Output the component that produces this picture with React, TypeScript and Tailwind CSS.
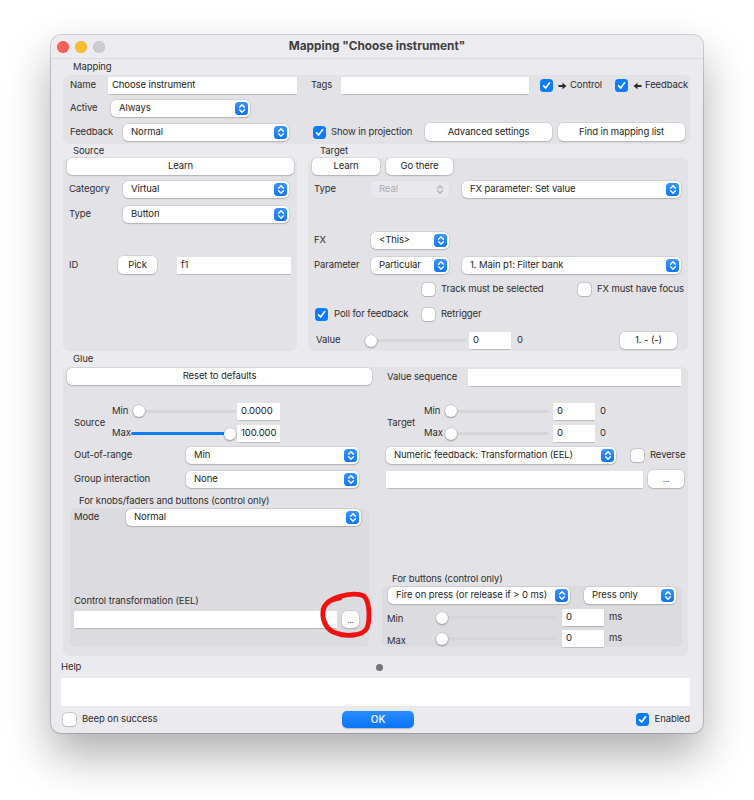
import React from "react";

const ctl =
  "shadow-[0_0_0_0.5px_rgba(0,0,0,0.13),0_1px_1.5px_rgba(0,0,0,0.16)]";

const Chevrons = ({ disabled }: { disabled?: boolean }) => (
  <span
    className={
      disabled
        ? "mr-[3px] flex h-[13px] w-[13px] items-center justify-center text-[#b3b2b6]"
        : "mr-[2px] flex h-[13px] w-[13px] items-center justify-center rounded-[3.5px] bg-[linear-gradient(#3b95ff,#0d76f5)] text-white"
    }
  >
    <svg width="8" height="11" viewBox="0 0 8 11" fill="none" stroke="currentColor" strokeWidth="1.4" strokeLinecap="round" strokeLinejoin="round">
      <path d="M1.6 4.2 L4 1.8 L6.4 4.2" />
      <path d="M1.6 6.8 L4 9.2 L6.4 6.8" />
    </svg>
  </span>
);

function Select({ className, value, disabled }: { className: string; value: string; disabled?: boolean }) {
  return (
    <div
      className={`flex h-[17px] shrink-0 items-center justify-between rounded-[5px] pl-[8px] ${
        disabled
          ? "bg-[#e9e8ec] text-[#aeadb2] shadow-[0_0_0_0.5px_rgba(0,0,0,0.04)]"
          : `bg-white text-[#262626] ${ctl}`
      } ${className}`}
    >
      <span className="truncate">{value}</span>
      <Chevrons disabled={disabled} />
    </div>
  );
}

function Btn({ className, children }: { className: string; children: React.ReactNode }) {
  return (
    <div className={`flex h-[17px] shrink-0 items-center justify-center rounded-[5px] bg-white text-[#262626] ${ctl} ${className}`}>
      {children}
    </div>
  );
}

function Field({ className, value }: { className: string; value?: string }) {
  return (
    <div className={`flex h-[17px] shrink-0 items-center bg-white pl-[4px] text-[#222] shadow-[0_0.5px_1px_rgba(0,0,0,0.18)] ${className}`}>
      {value}
    </div>
  );
}

function Check({ on }: { on?: boolean }) {
  return on ? (
    <span className="flex h-[13px] w-[13px] shrink-0 items-center justify-center rounded-[3.5px] bg-[#0b7cff]">
      <svg width="9" height="9" viewBox="0 0 10 10">
        <path d="M1.8 5.4 L4 7.8 L8.4 2" fill="none" stroke="white" strokeWidth="1.9" strokeLinecap="round" strokeLinejoin="round" />
      </svg>
    </span>
  ) : (
    <span className="block h-[13px] w-[13px] shrink-0 rounded-[3.5px] bg-white shadow-[0_0_0_0.5px_rgba(0,0,0,0.22),0_0.5px_1px_rgba(0,0,0,0.12)]" />
  );
}

function Slider({ className, full }: { className: string; full?: boolean }) {
  return (
    <div className={`relative flex h-[12px] shrink-0 items-center ${className}`}>
      <div className="h-[3px] w-full rounded-full bg-[#d6d5d9]" />
      {full && <div className="absolute left-[-2px] h-[3px] w-[calc(100%-4px)] rounded-full bg-[#0b7cff]" />}
      <span
        className={`absolute top-0 h-[12px] w-[12px] rounded-full bg-white shadow-[0_0_0_0.5px_rgba(0,0,0,0.15),0_1px_2px_rgba(0,0,0,0.3)] ${
          full ? "right-0" : "left-0"
        }`}
      />
    </div>
  );
}

const Arrow = ({ left }: { left?: boolean }) => (
  <svg width="9" height="8" viewBox="0 0 9 8" className={left ? "mr-[3px] rotate-180" : "mr-[3px]"}>
    <path d="M0.5 3 H4.5 V0.8 L8.5 4 L4.5 7.2 V5 H0.5 Z" fill="#2a2a2a" />
  </svg>
);

export default function App() {
  return (
    <div className="min-h-[800px] bg-white pl-[51px] pt-[35px] text-[9.5px] tracking-[-0.1px] text-[#2e2e30] [font-family:Inter,'Liberation_Sans',sans-serif]">
      <div className="relative h-[698px] w-[652px] overflow-hidden rounded-[10px] bg-[#ebeaee] shadow-[0_22px_45px_rgba(0,0,0,0.32),0_0_0_1px_rgba(0,0,0,0.16)]">
        {/* title bar */}
        <div className="grid h-[24px] grid-cols-[1fr_auto_1fr] items-center border-b border-[#dcdbdf] bg-[#ecebef]">
          <div className="flex gap-[6px] pl-[6px]">
            <span className="h-[12px] w-[12px] rounded-full bg-[#fe5f57] shadow-[inset_0_0_0_0.5px_rgba(0,0,0,0.12)]" />
            <span className="h-[12px] w-[12px] rounded-full bg-[#febc2e] shadow-[inset_0_0_0_0.5px_rgba(0,0,0,0.12)]" />
            <span className="h-[12px] w-[12px] rounded-full bg-[#cdcccf] shadow-[inset_0_0_0_0.5px_rgba(0,0,0,0.1)]" />
          </div>
          <div className="text-[11.8px] font-bold tracking-normal text-[#3e3e40]">Mapping "Choose instrument"</div>
          <div />
        </div>

        {/* Mapping */}
        <div className="flex h-[16px] items-center pl-[22px]">Mapping</div>
        <div className="ml-[12px] h-[69px] w-[627px] rounded-[6px] bg-[#e3e2e6] pt-[2px]">
          <div className="flex h-[17px] items-center pl-[7px]">
            <span className="w-[38px]">Name</span>
            <Field className="w-[189px]" value="Choose instrument" />
            <span className="ml-[14px] w-[30px]">Tags</span>
            <Field className="w-[188px]" />
            <span className="ml-[11px] flex w-[75px] items-center">
              <Check on />
              <span className="ml-[5px] flex items-center">
                <Arrow />
                Control
              </span>
            </span>
            <span className="flex items-center">
              <Check on />
              <span className="ml-[5px] flex items-center">
                <Arrow left />
                Feedback
              </span>
            </span>
          </div>
          <div className="mt-[6px] flex h-[17px] items-center pl-[7px]">
            <span className="w-[41px]">Active</span>
            <Select className="w-[139px]" value="Always" />
          </div>
          <div className="mt-[6px] flex h-[18px] items-center pl-[7px]">
            <span className="w-[53px]">Feedback</span>
            <Select className="w-[166px]" value="Normal" />
            <span className="ml-[24px] flex w-[112px] items-center">
              <Check on />
              <span className="ml-[5px]">Show in projection</span>
            </span>
            <Btn className="h-[18px] w-[127px]">Advanced settings</Btn>
            <Btn className="ml-[6px] h-[18px] w-[127px]">Find in mapping list</Btn>
          </div>
        </div>

        {/* Source / Target */}
        <div className="ml-[12px] flex">
          <div className="w-[234px]">
            <div className="flex h-[14px] items-center pl-[10px] pt-[1px]">Source</div>
            <div className="h-[193px] rounded-[6px] bg-[#e3e2e6]">
              <Btn className="ml-[4px] w-[227px]">Learn</Btn>
              <div className="mt-[6px] flex h-[17px] items-center pl-[6px]">
                <span className="w-[54px]">Category</span>
                <Select className="w-[166px]" value="Virtual" />
              </div>
              <div className="mt-[8px] flex h-[17px] items-center pl-[6px]">
                <span className="w-[54px]">Type</span>
                <Select className="w-[166px]" value="Button" />
              </div>
              <div className="mt-[33px] flex h-[18px] items-center pl-[6px]">
                <span className="w-[49px]">ID</span>
                <Btn className="h-[18px] w-[39px]">Pick</Btn>
                <Field className="ml-[20px] w-[114px]" value="f1" />
              </div>
            </div>
          </div>
          <div className="ml-[11px] w-[380px]">
            <div className="flex h-[14px] items-center pl-[12px] pt-[1px]">Target</div>
            <div className="h-[193px] rounded-[6px] bg-[#e3e2e6]">
              <div className="flex h-[17px] items-center pl-[4px]">
                <Btn className="w-[68px]">Learn</Btn>
                <Btn className="ml-[6px] w-[67px]">Go there</Btn>
              </div>
              <div className="mt-[6px] flex h-[17px] items-center pl-[6px]">
                <span className="w-[57px]">Type</span>
                <Select className="w-[78px]" value="Real" disabled />
                <Select className="ml-[13px] w-[219px]" value="FX parameter: Set value" />
              </div>
              <div className="mt-[34px] flex h-[17px] items-center pl-[6px]">
                <span className="w-[57px]">FX</span>
                <Select className="w-[78px]" value="<This>" />
              </div>
              <div className="mt-[8px] flex h-[17px] items-center pl-[6px]">
                <span className="w-[57px]">Parameter</span>
                <Select className="w-[78px]" value="Particular" />
                <Select className="ml-[13px] w-[219px]" value="1. Main p1: Filter bank" />
              </div>
              <div className="mt-[9px] flex h-[13px] items-center pl-[114px]">
                <span className="flex w-[156px] items-center">
                  <Check />
                  <span className="ml-[6px]">Track must be selected</span>
                </span>
                <Check />
                <span className="ml-[6px]">FX must have focus</span>
              </div>
              <div className="mt-[12px] flex h-[13px] items-center pl-[7px]">
                <span className="flex w-[107px] items-center">
                  <Check on />
                  <span className="ml-[6px]">Poll for feedback</span>
                </span>
                <Check />
                <span className="ml-[6px]">Retrigger</span>
              </div>
              <div className="mt-[11px] flex h-[17px] items-center pl-[8px] pr-[11px]">
                <span className="w-[49px]">Value</span>
                <Slider className="w-[101px]" />
                <Field className="ml-[3px] w-[42px]" value="0" />
                <span className="ml-[6px] flex-1">0</span>
                <Btn className="w-[57px]">1. - (-)</Btn>
              </div>
            </div>
          </div>
        </div>

        {/* Glue */}
        <div className="flex h-[16px] items-center pl-[22px]">Glue</div>
        <div className="ml-[12px] flex h-[289px] w-[625px] rounded-[6px] bg-[#e3e2e6]">
          <div className="w-[309px] pt-[1px]">
            <Btn className="ml-[4px] w-[305px]">Reset to defaults</Btn>
            <div className="mt-[18px] flex h-[39px] items-center pl-[11px]">
              <span className="w-[38px] pt-[2px]">Source</span>
              <div className="flex flex-col">
                <div className="flex h-[16px] items-center">
                  <span className="w-[21px]">Min</span>
                  <Slider className="w-[103px]" />
                  <Field className="ml-[1px] h-[16px] w-[43px]" value="0.0000" />
                </div>
                <div className="mt-[6px] flex h-[17px] items-center">
                  <span className="w-[21px]">Max</span>
                  <Slider className="w-[103px]" full />
                  <Field className="ml-[1px] w-[43px]" value="100.000" />
                </div>
              </div>
            </div>
            <div className="mt-[5px] flex h-[17px] items-center pl-[11px]">
              <span className="w-[112px]">Out-of-range</span>
              <Select className="w-[173px]" value="Min" />
            </div>
            <div className="mt-[7px] flex h-[17px] items-center pl-[11px]">
              <span className="w-[112px]">Group interaction</span>
              <Select className="w-[173px]" value="None" />
            </div>
            <div className="mt-[6px] flex h-[14px] items-center pl-[16px]">For knobs/faders and buttons (control only)</div>
            <div className="ml-[7px] h-[139px] w-[299px] rounded-[6px] bg-[#dcdbdf] pt-[1px]">
              <div className="flex h-[17px] items-center pl-[4px]">
                <span className="w-[52px]">Mode</span>
                <Select className="w-[235px]" value="Normal" />
              </div>
              <div className="mt-[68px] flex h-[14px] items-center pl-[4px]">Control transformation (EEL)</div>
              <div className="mt-[3px] flex h-[17px] items-center pl-[4px]">
                <Field className="w-[263px]" />
                <Btn className="ml-[5px] w-[17px] text-[8px]">...</Btn>
              </div>
            </div>
          </div>
          <div className="ml-[10px] w-[306px]">
            <div className="mt-[2px] flex h-[16px] items-center pl-[5px]">
              <span className="w-[81px]">Value sequence</span>
              <Field className="h-[16px] w-[213px]" />
            </div>
            <div className="mt-[18px] flex h-[39px] items-center pl-[5px]">
              <span className="w-[37px] pt-[2px]">Target</span>
              <div className="flex flex-col">
                <div className="flex h-[16px] items-center">
                  <span className="w-[21px]">Min</span>
                  <Slider className="w-[104px]" />
                  <Field className="ml-[4px] h-[16px] w-[42px]" value="0" />
                  <span className="ml-[5px]">0</span>
                </div>
                <div className="mt-[6px] flex h-[17px] items-center">
                  <span className="w-[21px]">Max</span>
                  <Slider className="w-[104px]" />
                  <Field className="ml-[4px] w-[42px]" value="0" />
                  <span className="ml-[5px]">0</span>
                </div>
              </div>
            </div>
            <div className="mt-[5px] flex h-[17px] items-center pl-[4px]">
              <Select className="w-[230px]" value="Numeric feedback: Transformation (EEL)" />
              <div className="ml-[15px] flex items-center">
                <Check />
              </div>
              <span className="ml-[6px]">Reverse</span>
            </div>
            <div className="mt-[6px] flex h-[18px] items-center pl-[4px]">
              <Field className="w-[257px]" />
              <Btn className="ml-[5px] h-[18px] w-[36px] text-[8px]">...</Btn>
            </div>
            <div className="mt-[84px] flex h-[14px] items-center pl-[10px]">For buttons (control only)</div>
            <div className="h-[61px] w-[300px] rounded-[6px] bg-[#dcdbdf] pt-[1px]">
              <div className="flex h-[17px] items-center pl-[6px]">
                <Select className="w-[182px]" value="Fire on press (or release if > 0 ms)" />
                <Select className="ml-[14px] w-[92px]" value="Press only" />
              </div>
              <div className="mt-[5px] flex h-[17px] items-center pl-[5px]">
                <span className="w-[49px] pt-[3px]">Min</span>
                <Slider className="w-[122px]" />
                <Field className="ml-[4px] h-[16px] w-[42px]" value="0" />
                <span className="ml-[5px]">ms</span>
              </div>
              <div className="mt-[4px] flex h-[17px] items-center pl-[5px]">
                <span className="w-[49px] pt-[5px]">Max</span>
                <Slider className="w-[122px]" />
                <Field className="ml-[4px] w-[42px]" value="0" />
                <span className="ml-[5px]">ms</span>
              </div>
            </div>
          </div>
        </div>

        {/* Help */}
        <div className="flex h-[22px] items-center pl-[10px]">
          <span className="w-[315px]">Help</span>
          <span className="h-[7px] w-[7px] rounded-full bg-[#767678]" />
        </div>
        <div className="ml-[10px] h-[28px] w-[629px] bg-white" />
        <div className="flex h-[27px] items-center">
          <div className="flex w-[291px] items-center pl-[12px]">
            <Check />
            <span className="ml-[6px]">Beep on success</span>
          </div>
          <div className="flex h-[17px] w-[72px] items-center justify-center rounded-[5px] bg-[linear-gradient(#2b8dff,#0a74f5)] text-[10px] font-medium text-white shadow-[0_0.5px_1px_rgba(0,0,0,0.2)]">
            OK
          </div>
          <div className="flex flex-1 items-center justify-end pr-[13px]">
            <Check on />
            <span className="ml-[6px]">Enabled</span>
          </div>
        </div>

        {/* hand-drawn red annotation */}
        <svg className="pointer-events-none absolute left-[267px] top-[555px]" width="56" height="50" viewBox="0 0 56 50">
          <path
            d="M10 12 C 20 5 38 2 46 6 C 52 12 52 30 49 38 C 45 46 28 47 18 43 C 8 40 4 30 5 21 C 6 14 12 9 22 8"
            fill="none"
            stroke="#f01010"
            strokeWidth="4.8"
            strokeLinecap="round"
            strokeLinejoin="round"
          />
        </svg>
      </div>
    </div>
  );
}
